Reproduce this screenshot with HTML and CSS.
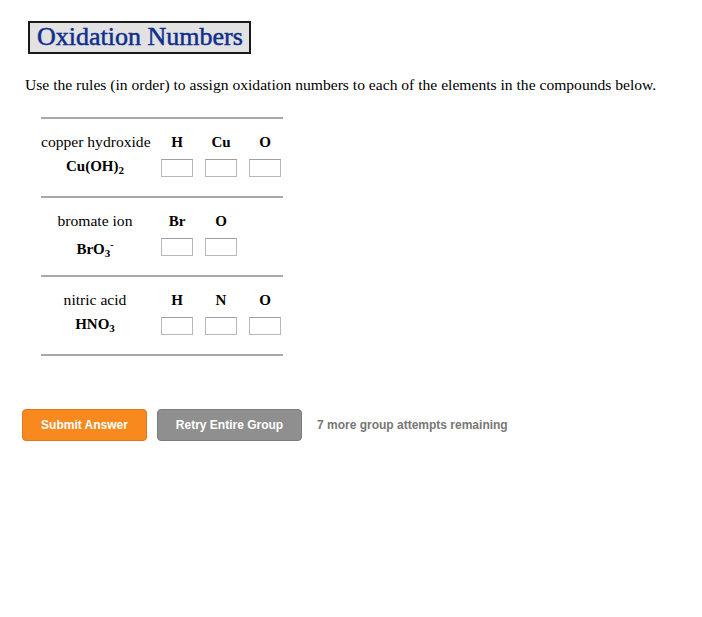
FILE: index.html
```html
<!DOCTYPE html>
<html>
<head>
<meta charset="utf-8">
<link rel="stylesheet" href="styles.css">
</head>
<body>
<div class="page">
  <h1 class="title">Oxidation Numbers</h1>
  <p class="intro">Use the rules (in order) to assign oxidation numbers to each of the elements in the compounds below.</p>
  <div class="compounds">
    <div class="compound">
      <div class="name">copper hydroxide</div>
      <div class="el">H</div><div class="el">Cu</div><div class="el">O</div>
      <div class="formula">Cu(OH)<sub>2</sub></div>
      <input class="box" type="text"><input class="box" type="text"><input class="box" type="text">
    </div>
    <div class="compound">
      <div class="name">bromate ion</div>
      <div class="el">Br</div><div class="el">O</div><div></div>
      <div class="formula">BrO<sub>3</sub><sup>-</sup></div>
      <input class="box" type="text"><input class="box" type="text"><div></div>
    </div>
    <div class="compound last">
      <div class="name">nitric acid</div>
      <div class="el">H</div><div class="el">N</div><div class="el">O</div>
      <div class="formula">HNO<sub>3</sub></div>
      <input class="box" type="text"><input class="box" type="text"><input class="box" type="text">
    </div>
  </div>
  <div class="actions">
    <button class="btn submit">Submit Answer</button>
    <button class="btn retry">Retry Entire Group</button>
    <span class="remaining">7 more group attempts remaining</span>
  </div>
</div>
</body>
</html>
```
FILE: styles.css
```css
html, body { margin: 0; padding: 0; background: #fff; }
body { font-family: "Liberation Serif", "Times New Roman", serif; color: #000; }
.page { padding: 21px 0 0 25px; }
.title {
  display: inline-block;
  margin: 0 0 0 3px;
  padding: 1px 6px 2px 7px;
  border: 2px solid #1a1a1a;
  background: #e2e2e2;
  color: #0f2f8c;
  font-family: "Liberation Serif", serif;
  font-weight: normal;
  -webkit-text-stroke: 0.5px #0f2f8c;
  font-size: 26px;
  line-height: 26px;
}
.intro { margin: 22px 0 0 0; font-size: 15.6px; line-height: 18px; }
.compounds { margin: 23px 0 0 16px; width: 242px; }
.compound {
  display: grid;
  grid-template-columns: 108px 32px 32px 32px;
  grid-template-rows: 22px 26px;
  column-gap: 12px;
  border-top: 2px solid #a8a8a8;
  padding: 12px 0 17px 0;
}
.compound.last { border-bottom: 2px solid #a8a8a8; }
.name { text-align: center; font-size: 15.6px; line-height: 22px; white-space: nowrap; }
.el { text-align: center; font-weight: bold; font-size: 15px; line-height: 22px; }
.formula { text-align: center; font-weight: bold; font-size: 15px; line-height: 26px; white-space: nowrap; }
.formula sub { font-size: 11px; vertical-align: -3px; }
.formula sup { font-size: 10px; vertical-align: 6px; }
.box {
  box-sizing: border-box;
  align-self: start;
  width: 32px; height: 18px;
  margin: 6px 0 0 0;
  padding: 0;
  border: 1px solid #b8b8b8;
  border-top-color: #a0a0a0;
  background: #fff;
}
.actions { display: flex; align-items: center; margin: 53px 0 0 -3px; }
.btn {
  box-sizing: border-box;
  height: 32px;
  border-radius: 4px;
  font-family: "Liberation Sans", Arial, sans-serif;
  font-weight: bold;
  font-size: 12px;
  color: #fff;
  padding: 0;
}
.submit { width: 125px; background: #f7891f; border: 1px solid #e2761a; }
.retry { width: 145px; margin-left: 10px; background: #8f8f8f; border: 1px solid #7c7c7c; }
.remaining { margin-left: 15px; font-family: "Liberation Sans", Arial, sans-serif; font-weight: bold; font-size: 12px; color: #777; }
```
